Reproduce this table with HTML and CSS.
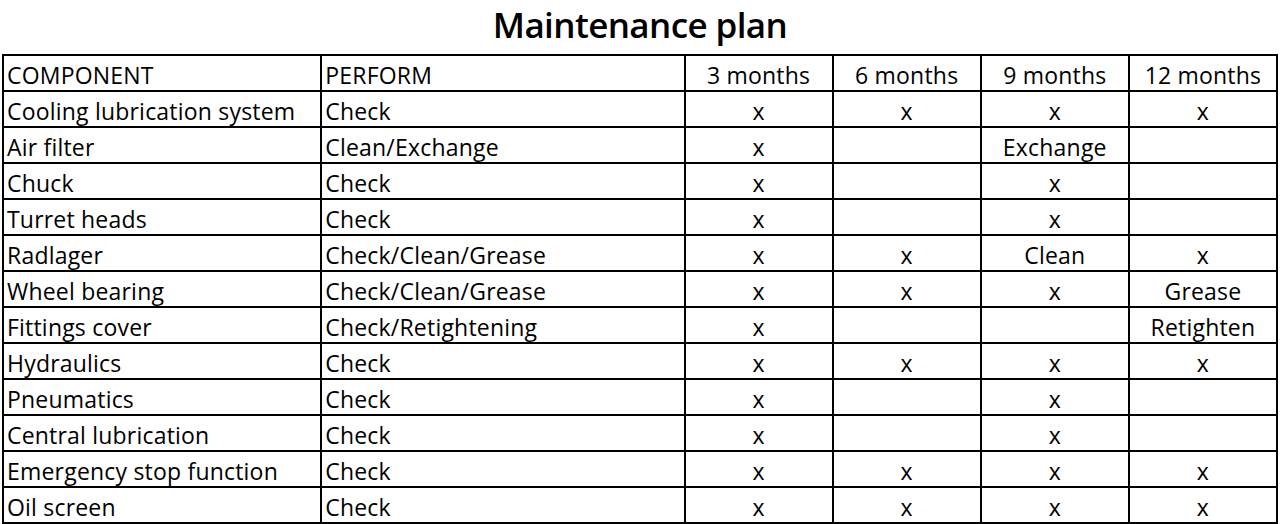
FILE: index.html
```html
<!DOCTYPE html>
<html>
<head>
<meta charset="utf-8">
<link rel="stylesheet" href="styles.css">
</head>
<body>
<h1 class="title">Maintenance plan</h1>
<table class="plan">
<colgroup>
<col class="c-comp"><col class="c-perf"><col class="c-m"><col class="c-m"><col class="c-m"><col class="c-m">
</colgroup>
<tr><td>COMPONENT</td><td>PERFORM</td><td class="ctr">3 months</td><td class="ctr">6 months</td><td class="ctr">9 months</td><td class="ctr">12 months</td></tr>
<tr><td>Cooling lubrication system</td><td>Check</td><td class="ctr">x</td><td class="ctr">x</td><td class="ctr">x</td><td class="ctr">x</td></tr>
<tr><td>Air filter</td><td>Clean/Exchange</td><td class="ctr">x</td><td class="ctr"></td><td class="ctr">Exchange</td><td class="ctr"></td></tr>
<tr><td>Chuck</td><td>Check</td><td class="ctr">x</td><td class="ctr"></td><td class="ctr">x</td><td class="ctr"></td></tr>
<tr><td>Turret heads</td><td>Check</td><td class="ctr">x</td><td class="ctr"></td><td class="ctr">x</td><td class="ctr"></td></tr>
<tr><td>Radlager</td><td>Check/Clean/Grease</td><td class="ctr">x</td><td class="ctr">x</td><td class="ctr">Clean</td><td class="ctr">x</td></tr>
<tr><td>Wheel bearing</td><td>Check/Clean/Grease</td><td class="ctr">x</td><td class="ctr">x</td><td class="ctr">x</td><td class="ctr">Grease</td></tr>
<tr><td>Fittings cover</td><td>Check/Retightening</td><td class="ctr">x</td><td class="ctr"></td><td class="ctr"></td><td class="ctr">Retighten</td></tr>
<tr><td>Hydraulics</td><td>Check</td><td class="ctr">x</td><td class="ctr">x</td><td class="ctr">x</td><td class="ctr">x</td></tr>
<tr><td>Pneumatics</td><td>Check</td><td class="ctr">x</td><td class="ctr"></td><td class="ctr">x</td><td class="ctr"></td></tr>
<tr><td>Central lubrication</td><td>Check</td><td class="ctr">x</td><td class="ctr"></td><td class="ctr">x</td><td class="ctr"></td></tr>
<tr><td>Emergency stop function</td><td>Check</td><td class="ctr">x</td><td class="ctr">x</td><td class="ctr">x</td><td class="ctr">x</td></tr>
<tr><td>Oil screen</td><td>Check</td><td class="ctr">x</td><td class="ctr">x</td><td class="ctr">x</td><td class="ctr">x</td></tr>
</table>
</body>
</html>
```
FILE: styles.css
```css
html, body {
  margin: 0;
  padding: 0;
  background: #ffffff;
}
body {
  font-family: "Open Sans", "Liberation Sans", sans-serif;
  color: #000;
  width: 1280px;
  height: 524px;
  overflow: hidden;
}
.title {
  margin: 0;
  height: 54px;
  line-height: 50px;
  text-align: center;
  font-size: 35px;
  font-weight: 600;
  letter-spacing: -0.6px;
}
.plan {
  margin-left: 2px;
  border-collapse: collapse;
  table-layout: fixed;
  width: 1276px;
  border: 2px solid #000;
}
.c-comp { width: 318px; }
.c-perf { width: 363px; }
.c-m { width: 148px; }
.plan tr {
  height: 36px;
}
.plan td {
  border: 2px solid #000;
  padding: 3px 3px 0 3px;
  line-height: 30px;
  font-size: 23px;
  letter-spacing: 0.2px;
  white-space: nowrap;
  overflow: hidden;
  vertical-align: middle;
}
.plan td.ctr {
  text-align: center;
}
```
